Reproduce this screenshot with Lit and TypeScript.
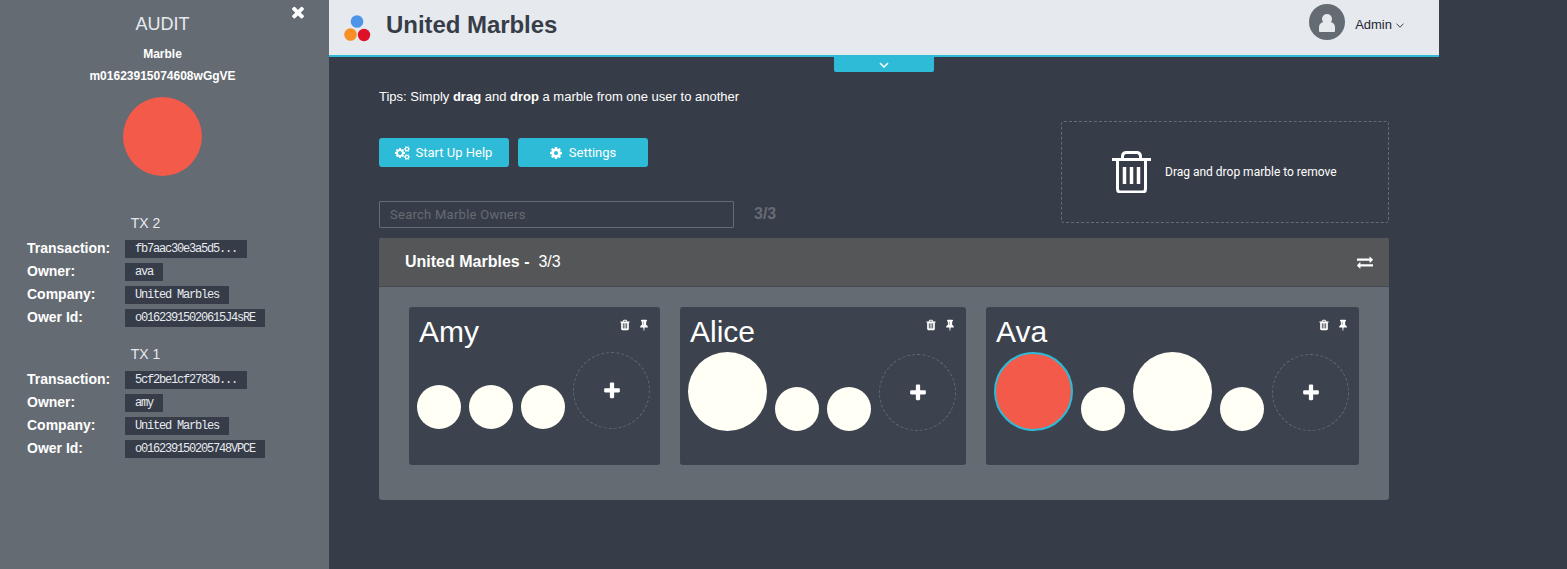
import { LitElement, html, css } from "lit";
import { customElement } from "lit/decorators.js";

const P = {
  times: "M1490 1322q0 40-28 68l-136 136q-28 28-68 28t-68-28l-294-294-294 294q-28 28-68 28t-68-28l-136-136q-28-28-28-68t28-68l294-294-294-294q-28-28-28-68t28-68l136-136q28-28 68-28t68 28l294 294 294-294q28-28 68-28t68 28l136 136q28 28 28 68t-28 68l-294 294 294 294q28 28 28 68z",
  cog: "M1152 896q0-106-75-181t-181-75-181 75-75 181 75 181 181 75 181-75 75-181zm512-109v222q0 12-8 23t-20 13l-185 28q-19 54-39 91 35 50 107 138 10 12 10 25t-9 23q-27 37-99 108t-94 71q-12 0-26-9l-138-108q-44 23-91 38-16 136-29 186-7 28-36 28h-222q-14 0-24.5-8.5t-11.5-21.5l-28-184q-49-16-90-37l-141 107q-10 9-25 9-14 0-25-11-126-114-165-168-7-10-7-23 0-12 8-23 15-21 51-66.5t54-70.5q-27-50-41-99l-183-27q-13-2-21-12.5t-8-23.5v-222q0-12 8-23t19-13l186-28q14-46 39-92-40-57-107-138-10-12-10-24 0-10 9-23 26-36 98.5-107.5t94.5-71.5q13 0 26 10l138 107q44-23 91-38 16-136 29-186 7-28 36-28h222q14 0 24.5 8.5t11.5 21.5l28 184q49 16 90 37l142-107q9-9 24-9 13 0 25 10 129 119 165 170 7 8 7 22 0 12-8 23-15 21-51 66.5t-54 70.5q26 50 41 98l183 28q13 2 21 12.5t8 23.5z",
  cogs: "M896 896q0-106-75-181t-181-75-181 75-75 181 75 181 181 75 181-75 75-181zm768 512q0-52-38-90t-90-38-90 38-38 90q0 53 37.5 90.5t90.5 37.5 90.5-37.5 37.5-90.5zm0-1024q0-52-38-90t-90-38-90 38-38 90q0 53 37.5 90.5t90.5 37.5 90.5-37.5 37.5-90.5zm-384 421v185q0 10-7 19.5t-16 10.5l-155 24q-11 35-32 76 34 48 90 115 7 11 7 20 0 12-7 19-23 30-82.5 89.5t-78.5 59.5q-11 0-21-7l-115-90q-37 19-77 31-11 108-23 155-7 24-30 24h-186q-11 0-20-7.5t-10-17.5l-23-153q-34-10-75-31l-118 89q-7 7-20 7-11 0-21-8-144-133-144-160 0-9 7-19 10-14 41-53t47-61q-23-44-35-82l-152-24q-10-1-17-9.5t-7-19.5v-185q0-10 7-19.5t16-10.5l155-24q11-35 32-76-34-48-90-115-7-11-7-20 0-12 7-20 22-30 82-89t79-59q11 0 21 7l115 90q34-18 77-32 11-108 23-154 7-24 30-24h186q11 0 20 7.5t10 17.5l23 153q34 10 75 31l118-89q8-7 20-7 11 0 21 8 144 133 144 160 0 8-7 19-12 16-42 54t-45 60q23 48 34 82l152 23q10 2 17 10.5t7 19.5zm640 533v140q0 16-149 31-12 27-30 52 51 113 51 138 0 4-4 7-122 71-124 71-8 0-46-47t-52-68q-20 2-30 2t-30-2q-14 21-52 68t-46 47q-2 0-124-71-4-3-4-7 0-25 51-138-18-25-30-52-149-15-149-31v-140q0-16 149-31 13-29 30-52-51-113-51-138 0-4 4-7 4-2 35-20t59-34 30-16q8 0 46 46.5t52 67.5q20-2 30-2t30 2q51-71 92-112l6-2q4 0 124 70 4 3 4 7 0 25-51 138 17 23 30 52 149 15 149 31zm0-1024v140q0 16-149 31-12 27-30 52 51 113 51 138 0 4-4 7-122 71-124 71-8 0-46-47t-52-68q-20 2-30 2t-30-2q-14 21-52 68t-46 47q-2 0-124-71-4-3-4-7 0-25 51-138-18-25-30-52-149-15-149-31v-140q0-16 149-31 13-29 30-52-51-113-51-138 0-4 4-7 4-2 35-20t59-34 30-16q8 0 46 46.5t52 67.5q20-2 30-2t30 2q51-71 92-112l6-2q4 0 124 70 4 3 4 7 0 25-51 138 17 23 30 52 149 15 149 31z",
  trash: "M704 1376v-704q0-14-9-23t-23-9h-64q-14 0-23 9t-9 23v704q0 14 9 23t23 9h64q14 0 23-9t9-23zm256 0v-704q0-14-9-23t-23-9h-64q-14 0-23 9t-9 23v704q0 14 9 23t23 9h64q14 0 23-9t9-23zm256 0v-704q0-14-9-23t-23-9h-64q-14 0-23 9t-9 23v704q0 14 9 23t23 9h64q14 0 23-9t9-23zm-544-992h448l-48-117q-7-9-17-11h-317q-10 2-17 11zm928 32v64q0 14-9 23t-23 9h-96v948q0 83-47 143.5t-113 60.5h-832q-66 0-113-58.5t-47-141.5v-952h-96q-14 0-23-9t-9-23v-64q0-14 9-23t23-9h309l70-167q15-37 54-63t79-26h320q40 0 79 26t54 63l70 167h309q14 0 23 9t9 23z",
  pin: "M800 864v-448q0-14-9-23t-23-9-23 9-9 23v448q0 14 9 23t23 9 23-9 9-23zm672 352q0 26-19 45t-45 19h-429l-51 483q-2 12-10.5 20.5t-20.5 8.5h-1q-27 0-32-27l-76-485h-404q-26 0-45-19t-19-45q0-123 78.5-221.5t177.5-98.5v-512q-52 0-90-38t-38-90 38-90 90-38h640q52 0 90 38t38 90-38 90-90 38v512q99 0 177.5 98.5t78.5 221.5z",
  plus: "M1600 736v192q0 40-28 68t-68 28h-416v416q0 40-28 68t-68 28h-192q-40 0-68-28t-28-68v-416h-416q-40 0-68-28t-28-68v-192q0-40 28-68t68-28h416v-416q0-40 28-68t68-28h192q40 0 68 28t28 68v416h416q40 0 68 28t28 68z",
  exchange: "M1792 1184v192q0 13-9.5 22.5t-22.5 9.5h-1376v192q0 13-9.5 22.5t-22.5 9.5q-12 0-24-10l-319-320q-9-9-9-22 0-14 9-23l320-320q9-9 23-9 13 0 22.5 9.5t9.5 22.5v192h1376q13 0 22.5 9.5t9.5 22.5zm0-544q0 14-9 23l-320 320q-9 9-23 9-13 0-22.5-9.5t-9.5-22.5v-192h-1376q-13 0-22.5-9.5t-9.5-22.5v-192q0-13 9.5-22.5t22.5-9.5h1376v-192q0-14 9-23t23-9q12 0 24 10l319 319q9 9 9 23z",
};

const icon = (d: string, cls: string, w = 1792) =>
  html`<svg class=${cls} viewBox="0 0 ${w} 1792" fill="currentColor"><path d=${d}></path></svg>`;

type Marble = { big?: boolean; red?: boolean };
const owners: { name: string; marbles: Marble[] }[] = [
  { name: "Amy", marbles: [{}, {}, {}] },
  { name: "Alice", marbles: [{ big: true }, {}, {}] },
  { name: "Ava", marbles: [{ big: true, red: true }, {}, { big: true }, {}] },
];

const txs = [
  { title: "TX 2", rows: [["Transaction:", "fb7aac30e3a5d5..."], ["Owner:", "ava"], ["Company:", "United Marbles"], ["Ower Id:", "o01623915020615J4sRE"]] },
  { title: "TX 1", rows: [["Transaction:", "5cf2be1cf2783b..."], ["Owner:", "amy"], ["Company:", "United Marbles"], ["Ower Id:", "o016239150205748VPCE"]] },
];

@customElement("app-root")
export class AppRoot extends LitElement {
  static styles = css`
    :host { display: block; min-height: 569px; background: #373d48; font-family: "Liberation Sans", Arial, sans-serif; color: #fff; }
    * { box-sizing: border-box; }
    .page { display: flex; min-height: 569px; }

    .audit { width: 329px; flex: none; background: #656b73; position: relative; }
    .audit-head { width: 325px; text-align: center; padding-top: 14px; }
    .audit-title { font-size: 18px; line-height: 20px; color: #e6eaef; }
    .audit-line { font-size: 12px; font-weight: 700; line-height: 22px; }
    .audit-line.first { margin-top: 9px; }
    .big-marble { width: 79px; height: 79px; border-radius: 50%; background: #f45a4a; margin: 10px auto 0; }
    .close { position: absolute; left: 289px; top: 3px; width: 18px; height: 18px; }
    .tx { padding-top: 39px; }
    .tx + .tx { padding-top: 20px; }
    .tx-title { width: 291px; text-align: center; font-size: 14px; line-height: 16px; color: #e6eaef; margin-bottom: 8px; }
    .tx-grid { display: grid; grid-template-columns: 98px 1fr; row-gap: 5px; padding-left: 27px; }
    .tx-label { font-size: 14px; font-weight: 700; line-height: 18px; }
    .chip { justify-self: start; height: 18px; line-height: 18px; margin: 1px 0 -1px; padding: 0 10px; background: #373d48; font-family: "Liberation Mono", monospace; font-size: 12px; letter-spacing: -1.2px; color: #e6eaef; white-space: pre; }
    .chip.long { width: 122px; }
    .chip.owner { width: 38px; }
    .chip.co { width: 104px; }
    .chip.id { width: 140px; }

    .main { flex: 1; position: relative; }
    .topbar { width: 1110px; height: 57px; background: #e6eaef; border-bottom: 2px solid #2ebbd8; display: flex; align-items: center; padding: 0 35px 0 15px; color: #373d48; }
    .logo { width: 27px; height: 27px; flex: none; margin-top: 2px; }
    .brand { font-size: 24px; font-weight: 700; letter-spacing: -0.05px; margin-left: 15px; flex: 1; line-height: 50px; margin-top: -6px; }
    .avatar { width: 36px; height: 36px; margin-top: -11px; flex: none; }
    .admin { font-size: 13px; margin-left: 10px; margin-top: -7px; color: #1f2733; }
    .chev { width: 8px; height: 5px; margin-left: 4px; margin-top: -4px; flex: none; }
    .drawer { position: absolute; left: 505px; top: 57px; width: 100px; height: 15px; background: #2ebbd8; border-radius: 0 0 2px 2px; display: flex; justify-content: center; align-items: center; }
    .drawer svg { width: 10px; height: 6px; }

    .content { padding: 32px 50px 0; width: 1110px; }
    .tips { font-size: 13px; line-height: 16px; }
    .tools { display: flex; justify-content: space-between; margin-top: 16px; height: 109px; }
    .tools-left { padding-top: 17px; }
    .btns { display: flex; gap: 9px; }
    .btn { width: 130px; height: 29px; padding-right: 1px; background: #2ebbd8; border-radius: 3px; font-family: Roboto, sans-serif; font-size: 13px; display: flex; align-items: center; justify-content: center; gap: 6px; color: #fff; }
    .btn svg { width: 14px; height: 14px; }
    .btn svg.cogs { width: 15px; height: 14px; }
    .search-row { display: flex; align-items: center; margin-top: 34px; }
    .search { width: 355px; height: 27px; border: 1px solid #656b73; border-radius: 1px; font-family: Roboto, sans-serif; font-size: 13px; letter-spacing: 0.02em; color: #656b73; padding: 0 10px; line-height: 25px; }
    .count { margin: -1px 0 0 20px; font-size: 16px; font-weight: 700; color: #656b73; }
    .dropzone { width: 328px; height: 102px; border: 1px dashed #656b73; border-radius: 3px; display: flex; align-items: center; padding-left: 50px; }
    .dropzone .bin { width: 40px; height: 42px; flex: none; margin-top: -1px; }
    .dropzone span { margin-left: 13px; font-family: Roboto, sans-serif; font-size: 12px; }

    .panel { margin-top: 8px; width: 1010px; height: 262px; background: #656b73; border-radius: 3px; overflow: hidden; }
    .panel-head { height: 49px; background: #555657; border-bottom: 1px solid #454a52; display: flex; align-items: center; padding: 0 16px 0 26px; font-size: 16px; }
    .panel-head b { font-weight: 700; }
    .panel-head .num { margin-left: 9px; flex: 1; }
    .panel-head svg { width: 16px; height: 16px; }
    .cards { display: flex; gap: 20px; padding: 20px 30px 0; }
    .card { background: #3c434e; border-radius: 3px; height: 158px; padding: 0 10px 0 8px; position: relative; }
    .name { font-size: 30px; line-height: 34px; padding: 8px 0 0 2px; height: 45px; }
    .card-icons { position: absolute; right: 10px; top: 12px; display: flex; gap: 7px; }
    .card-icons svg { width: 12px; height: 12px; display: block; }
    .row { display: flex; align-items: flex-end; gap: 8px; }
    .marble { width: 44px; height: 44px; border-radius: 50%; background: #fffff5; flex: none; }
    .marble.big { width: 79px; height: 79px; }
    .marble.red { background: #f45a4a; border: 2px solid #2ebbd8; }
    .add { width: 77px; height: 77px; border-radius: 50%; border: 1px dashed #656b73; display: flex; align-items: center; justify-content: center; flex: none; }
    .add svg { width: 20px; height: 20px; }
  `;

  render() {
    return html`<div class="page">
      <aside class="audit">
        <div class="audit-head">
          <div class="audit-title">AUDIT</div>
          <div class="audit-line first">Marble</div>
          <div class="audit-line">m01623915074608wGgVE</div>
          <div class="big-marble"></div>
        </div>
        ${icon(P.times, "close")}
        ${txs.map(
          (t) => html`<section class="tx">
            <div class="tx-title">${t.title}</div>
            <div class="tx-grid">
              ${t.rows.map(
                (r, i) => html`<div class="tx-label">${r[0]}</div><div class="chip ${["long", "owner", "co", "id"][i]}">${r[1]}</div>`
              )}
            </div>
          </section>`
        )}
      </aside>
      <main class="main">
        <header class="topbar">
          <svg class="logo" viewBox="0 0 27 27">
            <circle cx="13" cy="6.500" r="6.300" fill="#4e94e8"></circle>
            <circle cx="6.500" cy="19.500" r="6.300" fill="#f78f26"></circle>
            <circle cx="20" cy="20" r="6.200" fill="#dd1229"></circle>
          </svg>
          <div class="brand">United Marbles</div>
          <svg class="avatar" viewBox="0 0 36 36">
            <circle cx="18" cy="18" r="18" fill="#656b73"></circle>
            <circle cx="18" cy="15" r="5" fill="#e6eaef"></circle>
            <path d="M10 27v-3.500q0-5 5-5.500h6q5 .5 5 5.500v3.500q0 1-1 1h-14q-1 0-1-1z" fill="#e6eaef"></path>
          </svg>
          <div class="admin">Admin</div>
          <svg class="chev" viewBox="0 0 8 5"><path d="M.5 .8L4 4.200L7.500 .8" fill="none" stroke="#373d48" stroke-width="1"></path></svg>
        </header>
        <div class="drawer"><svg viewBox="0 0 10 6"><path d="M1 1l4 4 4-4" fill="none" stroke="#fff" stroke-width="1.500"></path></svg></div>
        <div class="content">
          <div class="tips">Tips: Simply <b>drag</b> and <b>drop</b> a marble from one user to another</div>
          <div class="tools">
            <div class="tools-left">
              <div class="btns">
                <div class="btn">${icon(P.cogs, "cogs", 1920)}Start Up Help</div>
                <div class="btn">${icon(P.cog, "cog")}Settings</div>
              </div>
              <div class="search-row">
                <div class="search">Search Marble Owners</div>
                <div class="count">3/3</div>
              </div>
            </div>
            <div class="dropzone">
              <svg class="bin" viewBox="0 0 40 42" fill="none" stroke="#fff" stroke-width="3">
                <path d="M0 8.500h39M5.500 8.500v29.500q0 3 3 3h22q3 0 3-3v-29.500M10.500 8V5.500q0-4 4-4h10q4 0 4 4v2.500" stroke-linejoin="round"></path>
                <path d="M12.500 16v17M19.500 16v17M26.500 16v17" stroke-width="3.500"></path>
              </svg>
              <span>Drag and drop marble to remove</span>
            </div>
          </div>
          <section class="panel">
            <div class="panel-head"><b>United Marbles -</b><span class="num">3/3</span>${icon(P.exchange, "swap")}</div>
            <div class="cards">
              ${owners.map(
                (o) => html`<div class="card">
                  <div class="name">${o.name}</div>
                  <div class="card-icons">${icon(P.trash, "t")}${icon(P.pin, "p")}</div>
                  <div class="row">
                    ${o.marbles.map((m) => html`<div class="marble ${m.big ? "big" : ""} ${m.red ? "red" : ""}"></div>`)}
                    <div class="add">${icon(P.plus, "plus")}</div>
                  </div>
                </div>`
              )}
            </div>
          </section>
        </div>
      </main>
    </div>`;
  }
}
